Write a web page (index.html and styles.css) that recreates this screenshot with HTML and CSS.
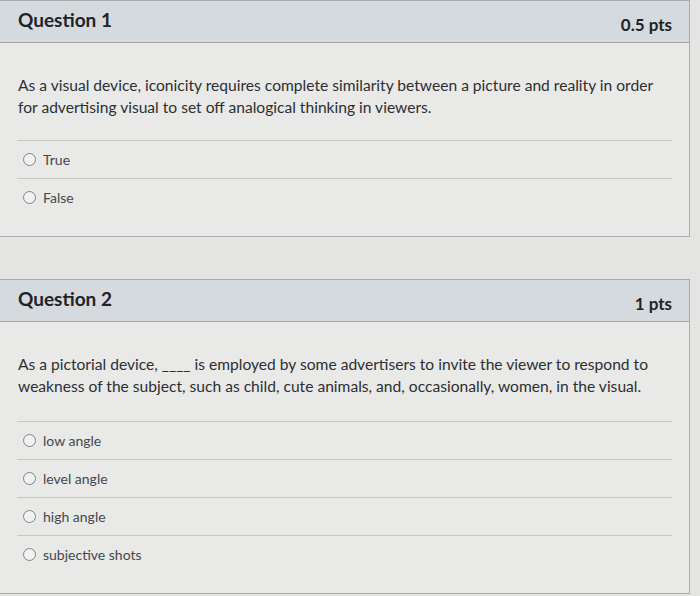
FILE: index.html
```html
<!DOCTYPE html>
<html lang="en">
<head>
<meta charset="utf-8">
<title>Quiz</title>
<link rel="stylesheet" href="styles.css">
</head>
<body>
<div class="page">
  <section class="card">
    <header class="card-header">
      <h2 class="q-title">Question 1</h2>
      <span class="q-pts">0.5 pts</span>
    </header>
    <div class="card-body">
      <p class="q-text">As a visual device, iconicity requires complete similarity between a picture and reality in order for advertising visual to set off analogical thinking in viewers.</p>
      <ul class="answers">
        <li class="answer"><span class="radio"></span><span class="label">True</span></li>
        <li class="answer"><span class="radio"></span><span class="label">False</span></li>
      </ul>
    </div>
  </section>
  <section class="card">
    <header class="card-header">
      <h2 class="q-title">Question 2</h2>
      <span class="q-pts">1 pts</span>
    </header>
    <div class="card-body">
      <p class="q-text q-text-long">As a pictorial device, ____ is employed by some advertisers to invite the viewer to respond to weakness of the subject, such as child, cute animals, and, occasionally, women, in the visual.</p>
      <ul class="answers">
        <li class="answer"><span class="radio"></span><span class="label">low angle</span></li>
        <li class="answer"><span class="radio"></span><span class="label">level angle</span></li>
        <li class="answer"><span class="radio"></span><span class="label">high angle</span></li>
        <li class="answer"><span class="radio"></span><span class="label">subjective shots</span></li>
      </ul>
    </div>
  </section>
</div>
</body>
</html>
```
FILE: styles.css
```css
html, body {
  margin: 0;
  padding: 0;
}
body {
  background: #e4e4e2;
  font-family: Lato, "Noto Sans", sans-serif;
  color: #2f3337;
  width: 700px;
  height: 596px;
  overflow: hidden;
}
.page {
  display: flex;
  flex-direction: column;
  gap: 42px;
}
.card {
  margin: 0 10px 0 -1px;
  border: 1px solid #a9abac;
  background: #e9e9e8;
}
.card-header {
  height: 42px;
  box-sizing: border-box;
  padding: 0 17px 0 18px;
  display: flex;
  align-items: baseline;
  justify-content: space-between;
  background: #d5dade;
  border-bottom: 1px solid #a2a6a9;
}
.q-title {
  margin: 0;
  font-size: 19px;
  font-weight: 700;
  line-height: 38px;
  color: #1f2326;
}
.q-pts {
  font-size: 17px;
  font-weight: 700;
  color: #1f2326;
  position: relative;
  top: 4px;
}
.card-body {
  padding: 31px 17px 20px 18px;
}
.q-text {
  margin: 0 0 22px;
  font-size: 15.6px;
  line-height: 22px;
  color: #2c3033;
}
.q-text-long {
  margin-bottom: 24px;
}
.answers {
  list-style: none;
  margin: 0 0 0 -1px;
  padding: 0;
}
.answer {
  height: 37px;
  border-top: 1px solid #c6c7c7;
  display: flex;
  align-items: center;
  gap: 7px;
  padding-left: 6px;
  font-size: 14px;
  color: #44484b;
}
.radio {
  width: 11px;
  height: 11px;
  border-radius: 50%;
  border: 1px solid #808487;
  background: #f2f2f2;
  flex: none;
}
```
